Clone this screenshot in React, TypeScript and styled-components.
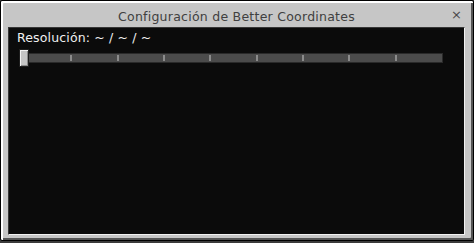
import React from 'react';
import styled, { createGlobalStyle } from "styled-components";

const GlobalStyle = createGlobalStyle`
    html, body {
        margin: 0;
        padding: 0;
        background: #3b3b3b;
    }
    body {
        width: 474px;
        height: 243px;
        overflow: hidden;
        font-family: "DejaVu Sans", "Liberation Sans", sans-serif;
    }
`

const TICKS = 9;

export default function App() {
    return (
        <>
            <GlobalStyle/>
            <Window>
                <TitleBar>
                    <Title>Configuración de Better Coordinates</Title>
                    <Close>×</Close>
                </TitleBar>
                <Panel>
                    <Label>Resolución: ~ / ~ / ~</Label>
                    <Slider>
                        <Track>
                            {Array.from({length: TICKS - 1}).map((_, i) => (
                                <Tick key={i} style={{left: `${((i + 1) / TICKS) * 100}%`}}/>
                            ))}
                        </Track>
                        <Knob/>
                    </Slider>
                </Panel>
            </Window>
        </>
    );
}

const Window = styled.div`
    box-sizing: border-box;
    width: 474px;
    height: 241px;
    background: #c6c6c6;
    border: 1px solid #000;
    border-radius: 2px;
    box-shadow: inset 2px 2px 0 #fff, inset -2px -2px 0 #555;
    display: flex;
    flex-direction: column;
    padding: 2px 8px 5px 7px;
`

const TitleBar = styled.div`
    position: relative;
    height: 24px;
    display: flex;
    align-items: center;
    justify-content: center;
`

const Title = styled.div`
    font-size: 12.5px;
    color: #404040;
    letter-spacing: 0.25px;
    margin-top: 3px;
`

const Close = styled.div`
    position: absolute;
    right: 3px;
    top: 5px;
    font-size: 13px;
    line-height: 13px;
    color: #4a4a4a;
`

const Panel = styled.div`
    flex: 1;
    background: #0b0b0b;
    border-top: 1px solid #373737;
    border-left: 1px solid #373737;
    border-bottom: 1px solid #f2f2f2;
    border-right: 1px solid #f2f2f2;
    padding: 3px 8px 0 8px;
    display: flex;
    flex-direction: column;
`

const Label = styled.div`
    font-size: 12.5px;
    color: #f0f0f0;
    line-height: 14px;
    letter-spacing: 0.15px;
`

const Slider = styled.div`
    position: relative;
    margin-top: 4px;
    margin-left: 2px;
    width: 424px;
    height: 18px;
    display: flex;
    align-items: center;
`

const Track = styled.div`
    position: relative;
    box-sizing: border-box;
    margin-left: 5px;
    width: 419px;
    height: 10px;
    background: #4b4b4b;
    border: 1px solid #2a2a2a;
`

const Tick = styled.div`
    position: absolute;
    top: 1px;
    width: 2px;
    height: 6px;
    margin-left: -1px;
    background: #8b8b8b;
`

const Knob = styled.div`
    position: absolute;
    left: 0;
    top: 0;
    box-sizing: border-box;
    width: 10px;
    height: 18px;
    background: #c6c6c6;
    border: 1px solid #1e1e1e;
    box-shadow: inset 1px 1px 0 #f4f4f4, inset -1px -1px 0 #8a8a8a;
`
